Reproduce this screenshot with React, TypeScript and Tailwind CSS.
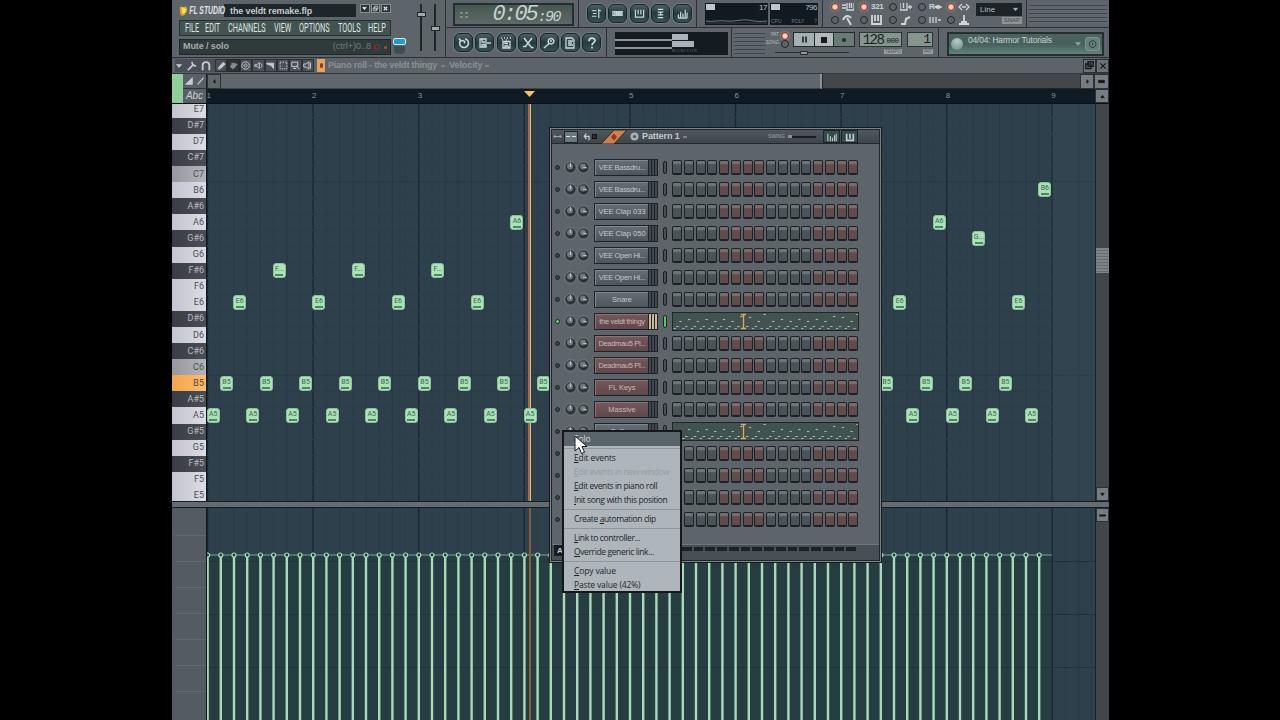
import type { ReactNode } from "react";

const STEP = 13.2;
const ROW = 16.1;

const keys = [
  "E7", "D#7", "D7", "C#7", "C7", "B6", "A#6", "A6", "G#6", "G6", "F#6", "F6", "E6",
  "D#6", "D6", "C#6", "C6", "B5", "A#5", "A5", "G#5", "G5", "F#5", "F5", "E5",
];

const phrase = [
  "A5", "B5", "E6", "A5", "B5", "F#6", "A5", "B5", "E6", "A5", "B5", "F#6",
  "A5", "B5", "E6", "A5", "B5", "F#6", "A5", "B5", "E6", "A5", "B5", "A6",
  "A5", "B5", "G#6", "A5", "B5", "E6", "A5", "B6",
];
const melody = [...phrase, ...phrase];

const channels = [
  { name: "VEE Bassdru...", kind: "grey" },
  { name: "VEE Bassdru...", kind: "grey" },
  { name: "VEE Clap 033", kind: "grey" },
  { name: "VEE Clap 050", kind: "grey" },
  { name: "VEE Open Hi...", kind: "grey" },
  { name: "VEE Open Hi...", kind: "grey" },
  { name: "Snare", kind: "grey" },
  { name: "the veldt thingy", kind: "red", roll: true, on: true },
  { name: "Deadmau5 Pl...", kind: "red" },
  { name: "Deadmau5 Pl...", kind: "red" },
  { name: "FL Keys", kind: "red" },
  { name: "Massive", kind: "red" },
  { name: "DrOne", kind: "grey", roll: true },
  { name: "", kind: "grey" },
  { name: "", kind: "grey" },
  { name: "", kind: "grey" },
  { name: "", kind: "grey" },
];

const contextMenu = [
  [{ label: "Solo", active: true }],
  [
    { label: "Edit events" },
    { label: "Edit events in new window", disabled: true },
    { label: "Edit events in piano roll" },
    { label: "Init song with this position" },
  ],
  [{ label: "Create automation clip", accel: 7 }],
  [{ label: "Link to controller..." }, { label: "Override generic link..." }],
  [{ label: "Copy value" }, { label: "Paste value (42%)" }],
] as { label: string; active?: boolean; disabled?: boolean; accel?: number }[][];

const mainMenu = [
  { label: "FILE", w: "w-[20px]" },
  { label: "EDIT", w: "w-[23px]" },
  { label: "CHANNELS", w: "w-[46px]" },
  { label: "VIEW", w: "w-[25px]" },
  { label: "OPTIONS", w: "w-[39px]" },
  { label: "TOOLS", w: "w-[30px]" },
  { label: "HELP", w: "w-[20px]" },
];

const Icon = ({ children, size = 12 }: { children: ReactNode; size?: number }) => (
  <svg width={size} height={size} viewBox="0 0 12 12" fill="none" stroke="currentColor" strokeWidth="1.3" className="shrink-0">
    {children}
  </svg>
);

const windowIcons = [
  <path d="M1 3h5M2 6h4M1 9h5M8.500 1v10M8.500 3H11" />,
  <path d="M1 4h2v4H1zM4.500 4h1v4h-1zM7 4h1v4H7zM9.500 4h1.500v4H9.500z" />,
  <path d="M1.500 2v8h9V2M4.500 2v5M7.500 2v5" />,
  <path d="M3 1.500h6M3 4.500h6M3 7.500h6M3 10.500h6M6 4v4" />,
  <path d="M1.500 11V7M4 11V4M6.500 11V6M9 11V2M11 11V5M1 11h10" />,
];

const toolIcons = [
  <path d="M2.500 3.500A4.400 4.400 0 1 0 7 1.800M1 1.500l2 2.500 3-.5M6.500 3.500v3" strokeWidth="1.600" />,
  <path d="M1 2h6v8H1zM3 2v3h3M3 10V7.500h2.500V10M8 6h4" />,
  <path d="M3 4.500h7V11H3zM5 4.500v2h3M5 11V9h3v2M1 1h1M4 1h1M7 1h1M10 1h1M2 2.800h1M6 2.800h1" />,
  <path d="M2 1l7 9M10 1L3 10M1 9.500h2M9 10.500h2.500" strokeWidth="1.500" />,
  <path d="M8 1.500a2.800 2.800 0 1 0 .1 0M6 6.500L1 11M8 3v2" strokeWidth="1.500" />,
  <path d="M3 1h5l2 2v8H2V1zM4 4h5M4 6h4M4 8h5" />,
  <path d="M3 4.200C3 .2 9 .2 9 3.500 9 5.800 6 5.500 6 8.200M6 9.800v1.600" strokeWidth="1.800" />,
];

const rollIcons = [
  <path d="M2 9l6-7 3 2-6 6zM1 10l3 1" fill="currentColor" />,
  <path d="M2 8c1-5 5-6 9-3-3 0-2 5-6 5zM3 3h3" fill="currentColor" />,
  <path d="M6 1a5 5 0 1 0 .1 0M6 4a2 2 0 1 0 .1 0" />,
  <path d="M1 5h3l3-3v8L4 7H1zM9 3c2 2 2 4 0 6" />,
  <path d="M1 3h9v7L7 6 1 4z" fill="currentColor" />,
  <path d="M1.500 1.500h9v9h-9z" strokeDasharray="2 1.300" />,
  <path d="M1 1.500h8v6H1zM7 6l4 5M3 10h4" />,
  <path d="M1 4h3l4-3v10L4 8H1zM10 2v8" />,
];

const RoundButton = ({ children }: { children: ReactNode }) => (
  <div className="flex h-[19px] w-[19px] items-center justify-center rounded-[6px] border border-[#17262a] bg-linear-to-b from-[#4c6062] via-[#263c40] to-[#38504f] text-[#ccd9da] shadow-[0_0_0_1px_#727a80]">
    {children}
  </div>
);

const Lamp = ({ on }: { on?: boolean }) => (
  <span
    className={
      on
        ? "h-[8px] w-[8px] shrink-0 rounded-full border border-[#7b4038] bg-[radial-gradient(circle,#ffd9cf_20%,#f0735f)] shadow-[0_0_2px_#ff9784]"
        : "h-[8px] w-[8px] shrink-0 rounded-full border border-[#22272a] bg-[#5d6469]"
    }
  />
);

const Lines = () => (
  <div className="h-full w-full bg-[repeating-linear-gradient(to_bottom,#5f666c_0px,#5f666c_3px,#3f464b_3px,#3f464b_4px)]" />
);

const LeftPanel = () => (
  <div className="flex h-full w-[274px] border-r border-[#2b3135]">
    <div className="flex w-[219px] flex-col pt-[3px] pl-[7px]">
      <div className="flex h-[14px] items-center">
        <svg width="9" height="13" viewBox="0 0 9 13">
          <path d="M1 6C0 2 3 1 5 2c4 0 4 5 2 7-1 2-3 3-4 3C1 11 1 9 1 6z" fill="#e79a25" />
          <path d="M3 3c-1 3 0 6 1 7 2-1 3-3 3-5z" fill="#f8df6c" />
          <path d="M4 0l2 3-4 0z" fill="#48753d" />
        </svg>
        <div className="flex w-[36px] overflow-visible">
          <span className="origin-left scale-x-[.62] pl-[2px] text-[11px] leading-none font-bold whitespace-nowrap text-[#dfe5e6] italic">
            FL STUDIO
          </span>
        </div>
        <div className="flex h-[13px] w-[132px] items-center bg-[#1d2629] pt-[2px] pl-[6px] text-[9px] leading-none font-bold tracking-[-.12px] text-[#c3c9cb]">
          the veldt remake.flp
        </div>
        <div className="mb-[3px] ml-[4px] flex gap-[1px] text-[#dfe4e6]">
          {[<path d="M3 4h6L6 8z" fill="currentColor" />, <path d="M4 2h6v5H4zM2 5h6v5H2z" />, <path d="M3 3l6 6M9 3L3 9" strokeWidth="2" />].map((p, i) => (
            <span key={i} className="flex h-[9px] w-[9.500px] items-center justify-center border border-[#878e93] bg-[#2c3437]">
              <Icon size={7}>{p}</Icon>
            </span>
          ))}
        </div>
      </div>
      <div className="mt-[3px] flex h-[16px] w-[212px] items-center border border-[#26302f] bg-[#43534f] pl-[5px] font-['Roboto'] text-[12px] leading-none text-[#dde6e4]">
        {mainMenu.map((m) => (
          <div key={m.label} className={m.w}>
            <span className="inline-block origin-left scale-x-[.61] whitespace-nowrap">{m.label}</span>
          </div>
        ))}
      </div>
      <div className="mt-[3px] flex h-[16px] w-[212px] items-center border border-[#1f2829] bg-[#2f3a3a] px-[3px] text-[9px]">
        <span className="font-bold tracking-[-.1px] text-[#a5adae]">Mute / solo</span>
        <span className="ml-auto text-[#71797c]">(ctrl+)0..8</span>
        <span className="ml-[3px] h-[6px] w-[6px] rounded-full border border-[#a03131]" />
        <span className="ml-[4px] h-[3px] w-[3px] rounded-full bg-[#d63a3a]" />
      </div>
    </div>
    <div className="flex w-[16px] flex-col items-center justify-end pb-[3px]">
      <div className="h-[7px] w-[13px] rounded-[2px] border border-[#c8effa] bg-[#1d9bdd]" />
      <div className="mt-[1px] h-[8px] w-[11px] rounded-b-[4px] bg-[#414d54]" />
    </div>
    <div className="flex gap-[4px] pt-[4px] pl-[9px]">
      <div className="flex h-[48px] w-[10px] flex-col items-center">
        <div className="h-[8px] w-[2px] bg-[#20272b]" />
        <div className="h-[5px] w-[9px] border border-[#22292c] bg-[#a2a9ad]" />
        <div className="h-[34px] w-[2px] bg-[#20272b]" />
      </div>
      <div className="flex h-[48px] w-[10px] flex-col items-center">
        <div className="h-[22px] w-[2px] bg-[#20272b]" />
        <div className="h-[5px] w-[9px] border border-[#22292c] bg-[#a2a9ad]" />
        <div className="h-[20px] w-[2px] bg-[#20272b]" />
      </div>
    </div>
  </div>
);

const TopRow = () => (
  <div className="flex h-[28px] border-b border-[#2b3135]">
    <div className="w-[133px] border-r border-[#2b3135] pt-[3px] pl-[7px]">
      <div className="flex h-[23px] w-[121px] items-center justify-end border-2 border-[#242f2f] bg-linear-to-b from-[#495753] to-[#5c6a65] pr-[12px] font-['Liberation_Mono'] text-[#c6d4d0] italic">
        <div className="mr-auto ml-[5px] grid grid-cols-2 gap-[2px]">
          {[0, 1, 2, 3].map((i) => (
            <span key={i} className="h-[2px] w-[3px] bg-[#7d8a86]" />
          ))}
        </div>
        <span className="text-[22px] leading-none tracking-[-2.2px]">0:05</span>
        <span className="pt-[5px] pl-[1px] text-[15px] leading-none tracking-[-1.5px]">:90</span>
      </div>
    </div>
    <div className="flex w-[118px] items-center gap-[2.400px] border-r border-[#2b3135] pl-[8px]">
      {windowIcons.map((icon, i) => (
        <RoundButton key={i}>
          <Icon size={11}>{icon}</Icon>
        </RoundButton>
      ))}
    </div>
    <div className="flex w-[126px] gap-[2px] border-r border-[#2b3135] pt-[3px] pl-[8px] text-[8px] leading-none text-[#b9c3c8]">
      <div className="flex h-[22px] w-[63px] flex-col justify-between bg-[#111a20] p-[1px]">
        <div className="flex justify-between">
          <span className="h-[6px] w-[9px] bg-[#bdc8c9]" />
          <span className="tracking-[-.5px]">17</span>
        </div>
        <svg width="61" height="7" fill="none" stroke="#6d7a80">
          <path d="M0 4c9 1 12-1 20 0s15-2 22-1 10 2 19 1" />
          <path d="M0 6h61" stroke="#35434a" />
        </svg>
      </div>
      <div className="flex h-[22px] w-[48px] flex-col justify-between bg-[#111a20] p-[1px]">
        <div className="flex justify-between">
          <span className="h-[6px] w-[9px] bg-[#bdc8c9]" />
          <span className="tracking-[-.5px]">796</span>
        </div>
        <div className="flex justify-between text-[5px] text-[#75838a]">
          <span>CPU</span>
          <span>POLY</span>
          <span>7</span>
        </div>
      </div>
    </div>
    <div className="flex w-[204px] border-r border-[#2b3135] text-[#cfd5d8]">
      <div className="grid h-[26px] w-[153px] grid-cols-5 pt-[1px] pl-[8px]">
        {[
          { on: true, icon: <path d="M0 4h4M0 7h4M5 2v7h7V2M7.500 2v5M9.500 2v5" /> },
          { on: true, text: "321" },
          { on: false, icon: <path d="M0 2v7h7V2M3.500 2v5M8 6h4M10 4v4" /> },
          { on: false, text: "R◂▸" },
          { on: true, icon: <path d="M4 3L1 6l3 3M8 3l3 3-3 3M4 6h4" /> },
          { on: false, icon: <path d="M1 6c2-5 6-5 8-2M5 4l4 7" strokeWidth="2" /> },
          { on: false, icon: <path d="M1 1v9h9V1M4 1v6M7 1v6" strokeWidth="1.800" /> },
          { on: false, icon: <path d="M1 10h4l1-5 4-2" strokeWidth="2" /> },
          { on: false, icon: <path d="M1 3v6M4 3v6M7 3v6M9 6h3" /> },
          { on: false, icon: <path d="M1 10h10M6 1v7M3 8h6" strokeWidth="1.800" /> },
        ].map((s, i) => (
          <div key={i} className="flex items-center gap-[3px]">
            <Lamp on={s.on} />
            {s.text ? <span className="text-[8px] leading-none font-bold tracking-[-.3px]">{s.text}</span> : <Icon size={12}>{s.icon}</Icon>}
          </div>
        ))}
      </div>
      <div className="flex flex-col items-end pt-[3px]">
        <div className="flex h-[13px] w-[46px] items-center justify-between bg-[#1c2427] px-[4px] text-[8px] text-[#b6bec1]">
          Line
          <Icon size={5}>
            <path d="M1 3h10L6 9z" fill="currentColor" />
          </Icon>
        </div>
        <span className="mt-[1px] bg-[#8d9499] px-[2px] text-[6px] leading-[7px] text-[#3d4448]">SNAP</span>
      </div>
    </div>
    <div className="flex-1 p-[2px]">
      <Lines />
    </div>
  </div>
);

const BottomRow = () => (
  <div className="flex h-[29px]">
    <div className="flex w-[161px] items-center gap-[2.400px] border-r border-[#2b3135] pl-[8px]">
      {toolIcons.map((icon, i) => (
        <RoundButton key={i}>
          <Icon>{icon}</Icon>
        </RoundButton>
      ))}
    </div>
    <div className="w-[125px] border-r border-[#2b3135] pt-[4px] pl-[8px]">
      <div className="flex h-[23px] w-[113px] bg-[#141c20]">
        <div className="flex w-[57px] flex-col gap-[6px] pt-[7px]">
          <div className="h-[2px] bg-[#8c979c]" />
          <div className="h-[2px] bg-[#8c979c]" />
        </div>
        <div className="flex flex-col gap-[1px] pt-[2px]">
          <div className="h-[6px] w-[16px] bg-[#aab2b9]" />
          <div className="h-[6px] w-[22px] bg-[#aab2b9]" />
          <span className="text-[4px] leading-[6px] tracking-[1px] whitespace-nowrap text-[#657177]">MONITOR</span>
        </div>
      </div>
    </div>
    <div className="w-[35px] p-[2px]">
      <Lines />
    </div>
    <div className="flex w-[172px] border-r border-[#2b3135] pt-[4px]">
      <div className="flex w-[26px] flex-col items-end gap-[1px] pr-[4px] text-[4.500px] text-[#b6bdc0]">
        <div className="flex h-[7px] items-center gap-[2px]">
          PAT <Lamp on />
        </div>
        <div className="flex h-[7px] items-center gap-[2px]">
          SONG <Lamp />
        </div>
      </div>
      <div>
        <div className="flex h-[15px] w-[62px] border border-[#242b2e] text-[#1c2427]">
          <div className="flex w-[20px] items-center justify-center bg-[#a4b0b4]">
            <Icon size={9}>
              <path d="M4 2v8M8 2v8" strokeWidth="2.200" />
            </Icon>
          </div>
          <div className="flex w-[20px] items-center justify-center border-x border-[#242b2e] bg-[#b2babc]">
            <div className="h-[6px] w-[6px] bg-[#171d1f]" />
          </div>
          <div className="flex w-[20px] items-center justify-center bg-[#687b75]">
            <div className="h-[4px] w-[4px] rounded-full bg-[#212b28]" />
          </div>
        </div>
        <div className="mt-[3px] -ml-[18px] flex h-[5px] w-[74px] items-center">
          <div className="h-px w-[25px] bg-[#2b3236]" />
          <div className="h-[4px] w-[8px] border border-[#262c2f] bg-[#8f979b]" />
          <div className="h-px flex-1 bg-[#2b3236]" />
        </div>
      </div>
      <div className="ml-[4px] flex flex-col items-end">
        <div className="flex h-[15px] w-[43px] items-center justify-center border border-[#2b3533] bg-[#86958e] font-['Liberation_Mono'] text-[14px] leading-none tracking-[-1.500px] text-[#17211e]">
          128<span className="pt-[3px] pl-[3px] text-[8px] tracking-[-.8px]">000</span>
        </div>
        <span className="mt-[2px] bg-[#9aa1a5] px-[1px] text-[4.500px] leading-[5px] text-[#4a5155]">TEMPO</span>
      </div>
      <div className="ml-[5px] flex flex-col items-end">
        <div className="flex h-[15px] w-[26px] items-center justify-end border border-[#2b3533] bg-[#86958e] pr-[1px] font-['Liberation_Mono'] text-[13px] leading-none text-[#17211e]">
          1
        </div>
        <span className="mt-[2px] bg-[#9aa1a5] px-[1px] text-[4.500px] leading-[5px] text-[#4a5155]">PAT</span>
      </div>
    </div>
    <div className="pt-[4px] pl-[8px]">
      <div className="flex h-[24px] w-[157px] items-center border-2 border-[#23302f] bg-linear-to-b from-[#4d6361] via-[#46605b] to-[#638079] px-[2px]">
        <div className="h-[12px] w-[12px] rounded-full bg-[radial-gradient(circle_at_50%_25%,#b7cdc6,#6c8780)]" />
        <span className="ml-[5px] pb-[8px] text-[8.500px] leading-none tracking-[-.22px] whitespace-nowrap text-[#c5d2cf]">04/04: Harmor Tutorials</span>
        <div className="ml-auto flex items-center gap-[4px] text-[#8ea39e]">
          <Icon size={6}>
            <path d="M1 3h10L6 9z" fill="currentColor" />
          </Icon>
          <div className="flex h-[14px] w-[15px] items-center justify-center rounded-[3px] border border-[#7d948e] bg-[#66817b] text-[#283936]">
            <Icon size={9}>
              <path d="M6 1a4.500 4.500 0 1 0 .1 0M6 4v3" />
            </Icon>
          </div>
        </div>
      </div>
    </div>
  </div>
);

const RollTitle = () => (
  <div className="flex h-[17px] items-center border-t border-b border-t-[#2a3034] border-b-[#33393d] bg-[#5c646a] pl-[3px] text-[#c5cacd]">
    <div className="flex h-[13px] w-[40px] items-center justify-between bg-[#485056] pr-[4px] pl-[1px]">
      <Icon size={6}>
        <path d="M1 3h10L6 9z" fill="currentColor" />
      </Icon>
      <Icon size={10}>
        <path d="M1 11l6-6M6 1c0 3 2 5 5 5" strokeWidth="2" />
      </Icon>
      <Icon size={10}>
        <path d="M2 11V5c0-5 8-5 8 0v6" strokeWidth="2.200" />
      </Icon>
    </div>
    <div className="flex w-[101px]">
      {rollIcons.map((icon, i) => (
        <span
          key={i}
          className={
            i === 1
              ? "flex h-[13px] w-[12.400px] items-center justify-center border border-[#22282b] bg-[#2c3438] text-[#858d91]"
              : "flex h-[13px] w-[12.400px] items-center justify-center border border-[#2b3135] bg-[#4a5156]"
          }
        >
          <Icon size={9}>{icon}</Icon>
        </span>
      ))}
    </div>
    <div className="ml-[1px] flex h-[13px] w-[8px] items-center justify-center bg-[#e5a55c]">
      <div className="h-[5px] w-[3px] rounded-full bg-[#8e3a1c]" />
    </div>
    <span className="ml-[3px] text-[9px] font-bold tracking-[-.22px] whitespace-nowrap text-[#8a9196]">
      Piano roll - the veldt thingy
    </span>
    <span className="ml-[4px] h-[2px] w-[4px] bg-[#7b8287]" />
    <span className="ml-[4px] text-[9px] font-bold tracking-[-.1px] text-[#8a9196]">Velocity</span>
    <span className="ml-[3px] h-[2px] w-[4px] bg-[#7b8287]" />
    <div className="ml-auto flex">
      <span className="flex h-[14px] w-[13px] items-center justify-center border border-[#2b3135] bg-[#6a7177] text-[#15191b]">
        <Icon size={9}>
          <path d="M4 1h7v6H4zM1 4h7v6H1z" strokeWidth="1.800" />
        </Icon>
      </span>
      <span className="flex h-[14px] w-[13px] items-center justify-center border border-[#2b3135] bg-[#6a7177] text-[#15191b]">
        <Icon size={8}>
          <path d="M2 2l8 8M10 2l-8 8" strokeWidth="1.800" />
        </Icon>
      </span>
    </div>
  </div>
);

const ScrollButton = ({ path, className }: { path: string; className: string }) => (
  <div className={"flex items-center justify-center border border-[#2b3135] bg-[#757c82] text-[#14181a] " + className}>
    <Icon size={7}>
      <path d={path} fill="currentColor" />
    </Icon>
  </div>
);

const RollHeader = () => (
  <div className="flex h-[29px]">
    <div className="w-[11px] bg-[#8fcf9b]" />
    <div className="flex w-[24px] flex-col border-r border-[#1d2428] bg-[#596066] text-[#c6cccf]">
      <div className="flex h-[15px] items-center justify-center gap-[4px] border-b border-[#30373b]">
        <Icon size={8}>
          <path d="M1 11L11 1v10z" fill="currentColor" />
        </Icon>
        <Icon size={8}>
          <path d="M1 11L10 1" strokeWidth="2" />
        </Icon>
      </div>
      <div className="flex h-[14px] items-center justify-center text-[10px] leading-none italic">Abc</div>
    </div>
    <div className="flex flex-1 flex-col">
      <div className="flex h-[15px]">
        <ScrollButton path="M7 3v6L4 6z" className="h-[15px] w-[14px] !bg-[#5f676d]" />
        <div className="w-[601px] border-r-2 border-b border-r-[#8d9499] border-b-[#3d4448] bg-[#5f676d]" />
        <div className="flex-1 border-b border-l border-[#20272b] bg-[#41474b]" />
        <ScrollButton path="M5 3v6l3-3z" className="h-[15px] w-[14px]" />
        <ScrollButton path="M1 4h10v4H1z" className="h-[15px] w-[15px]" />
      </div>
      <div className="flex h-[14px] bg-[#0e1b24]">
        <div className="relative h-full flex-1 overflow-hidden">
          {[1, 2, 3, 4, 5, 6, 7, 8, 9].map((n) => (
            <span
              key={n}
              className="absolute top-[3px] text-[8px] leading-none text-[#86939a]"
              style={{ left: (n - 1) * STEP * 8 - 0.5 }}
            >
              {n === 4 ? "" : n}
            </span>
          ))}
          <svg width="12" height="8" className="absolute top-[1px] left-[317px]">
            <path d="M0 1h11L5.500 7z" fill="#f6c262" />
          </svg>
        </div>
        <ScrollButton path="M3 8h6L6 4z" className="h-[14px] w-[14px]" />
      </div>
    </div>
  </div>
);

const keyClass = (k: string) => {
  if (k === "B5") return "bg-linear-to-r from-[#f2a550] to-[#fbbd6e] text-[#5d4322]";
  if (k.includes("#")) return "bg-linear-to-r from-[#3a3c43] to-[#4c4e57] text-[#b9bbc3]";
  if (k.startsWith("C")) return "bg-linear-to-r from-[#97989e] to-[#b4b5bb] text-[#4b4e56]";
  return "bg-linear-to-r from-[#c3c4cd] to-[#dcdce5] text-[#4b4e56]";
};

const Keyboard = () => (
  <div className="flex h-[397px] w-[34px] flex-col justify-end overflow-hidden">
    <div className="-mb-[3px]">
      {keys.map((k) => (
        <div
          key={k}
          className={"flex h-[16.1px] items-center justify-end pr-[2px] font-['Roboto'] text-[9px] leading-none " + keyClass(k)}
        >
          {k}
        </div>
      ))}
    </div>
  </div>
);

const GridLines = ({ height, children }: { height: number; children?: ReactNode }) => (
  <svg width="888" height={height} className="absolute inset-0">
    {Array.from({ length: 68 }, (_, i) => (
      <path
        key={i}
        d={`M${i * STEP + 0.5} 0V${height}`}
        stroke={i % 8 === 0 ? "#192732" : i % 2 === 0 ? "#273843" : "#2b3d48"}
        strokeWidth={i % 8 === 0 ? 1.4 : 1}
      />
    ))}
    {children}
  </svg>
);

const NoteGrid = () => (
  <div className="relative h-[397px] w-[888px] overflow-hidden bg-[#2e404b]">
    <GridLines height={397}>
      {keys.map((k, i) => (
        <path
          key={k}
          d={`M0 ${i * ROW - 2.6}H888`}
          stroke={k.startsWith("B") ? "#263741" : "#2c3e49"}
        />
      ))}
      <path d="M845 0h43v397h-43z" fill="#3a4f5c" opacity=".3" />
    </GridLines>
    <div className="absolute top-0 left-[321px] h-full w-[3px] border-r border-[#dcb88a] bg-[#a56b41]" />
    {melody.map((n, i) => (
      <div
        key={i}
        className="absolute flex h-[15px] w-[13px] flex-col items-center rounded-[3px] border border-[#88c39a] bg-[#ace2b8] pt-[2px] font-['Roboto'] text-[7px] leading-[7px] text-[#35664a]"
        style={{ left: i * STEP - 0.2, top: keys.indexOf(n) * ROW - 2.1 }}
      >
        {n.includes("#") ? n[0] + "..." : n}
        <span className="mt-[1px] h-[2px] w-[8px] bg-[#4f8562]" />
      </div>
    ))}
  </div>
);

const VelocityPane = () => (
  <div className="relative h-[213px] w-[888px] overflow-hidden bg-[#2e404b]">
    <GridLines height={213}>
      <path d="M0 47h845v166H0z" fill="#203a3b" opacity=".55" />
      <path d="M0 53.500H888M0 106.500H888M0 159.500H888" stroke="#22323c" />
      <path d="M0 47H845" stroke="#7fa393" strokeWidth="1.200" />
      {melody.map((_, i) => (
        <g key={i}>
          <path d={`M${i * STEP + 0.6} 49V213`} stroke="#a9dbba" strokeWidth="2.4" />
          <circle cx={i * STEP + 0.6} cy="47" r="2" fill="#24393c" stroke="#a6dbb6" strokeWidth="1.200" />
        </g>
      ))}
    </GridLines>
    <div className="absolute top-0 left-[322px] h-full w-[2px] bg-[#8a5b3c]" />
  </div>
);

const PianoRoll = () => (
  <div>
    <RollTitle />
    <RollHeader />
    <div className="flex border-t border-[#0b1217]">
      <Keyboard />
      <div className="w-px bg-[#0d161c]" />
      <NoteGrid />
      <div className="flex h-[397px] w-[14px] flex-col border-l border-[#1b2226] bg-[#41464a]">
        <div className="mt-[144px] h-[25px] bg-[repeating-linear-gradient(to_bottom,#7e8488_0px,#7e8488_2px,#666c70_2px,#666c70_3px)]" />
        <ScrollButton path="M3 4h6L6 8z" className="mt-auto h-[14px] w-[13px]" />
      </div>
    </div>
    <div className="h-[7px] border-y border-[#161d21] bg-[#656c71]" />
    <div className="flex h-[213px]">
      <div className="flex w-[34px] flex-col gap-[25px] bg-[#545b61] pt-[27px] pl-[3px]">
        {[0, 1, 2, 3, 4, 5, 6].map((i) => (
          <div key={i} className="h-px shrink-0 bg-[#616970]" />
        ))}
      </div>
      <div className="w-px bg-[#0d161c]" />
      <VelocityPane />
      <div className="w-[14px] border-l border-[#1b2226] bg-[#41464a]">
        <ScrollButton path="M1 5h10v2H1z" className="h-[14px] w-[13px]" />
      </div>
    </div>
  </div>
);

const pitch: Record<string, number> = { B6: 0, A6: 2, "G#6": 3, "F#6": 5, E6: 7, B5: 12, A5: 14 };

const MiniRoll = () => (
  <svg width="187" height="19" className="border border-[#1d2628] bg-[#42534f]">
    {melody.map((n, i) => (
      <path key={i} d={`M${i * 2.9 + 0.5} ${pitch[n] + 1.5}h2.4`} stroke="#a3b8ab" strokeWidth="1.100" />
    ))}
    <path d="M70.500 1v15M68 1.500h5M68 15.500h5" stroke="#dca864" strokeWidth="1.300" />
  </svg>
);

const Knob = ({ pan }: { pan?: boolean }) => (
  <svg width="13" height="13" viewBox="0 0 13 13">
    <circle cx="6.500" cy="6.500" r="6" fill="#4b5358" stroke="#7a8287" strokeWidth=".7" />
    <circle cx="6.500" cy="6.500" r="4.500" fill="#2a3135" />
    <circle cx="6" cy="5.500" r="3" fill="#6e777c" />
    <path d={pan ? "M6 6l4 1" : "M6.500 6V2.200"} stroke="#c2c9cc" strokeWidth="1.200" />
  </svg>
);

const ChannelRow = ({ channel }: { channel: (typeof channels)[number] }) => (
  <div className="flex h-[22px] items-center">
    <span
      className={
        channel.on
          ? "h-[5px] w-[5px] rounded-full border border-[#1d2528] bg-[#5fd36b]"
          : "h-[5px] w-[5px] rounded-full border border-[#1d2528] bg-[#3c4448]"
      }
    />
    <div className="ml-[4px] flex">
      <Knob />
      <Knob pan />
    </div>
    <div className="ml-[4px] flex h-[17px] w-[64px] border border-[#1d2327] bg-[#1d2327]">
      <div
        className={
          "flex w-[53px] items-center justify-center overflow-hidden border-t border-l text-[7.500px] leading-none whitespace-nowrap " +
          (channel.name.length > 12 ? "tracking-[-.32px] " : "") +
          (channel.kind === "red"
            ? "border-[#8c7376] bg-linear-to-b from-[#74585b] to-[#5f474a] text-[#cbb8b9]"
            : "border-[#7f888e] bg-linear-to-b from-[#646d73] to-[#4c555b] text-[#c2c9cc]")
        }
      >
        {channel.name}
      </div>
      <div className="flex flex-1 justify-between pl-[1px]">
        {[0, 1, 2].map((i) => (
          <span key={i} className={channel.on ? "w-[2px] bg-[#c9bc98]" : "w-[2px] bg-[#40484d]"} />
        ))}
      </div>
    </div>
    <span
      className={
        channel.on
          ? "ml-[5px] h-[13px] w-[4px] rounded-[2px] border border-[#1d2528] bg-[#55c865]"
          : "ml-[5px] h-[13px] w-[4px] rounded-[2px] border border-[#171d20] bg-[#495156]"
      }
    />
    <div className="ml-[5px] flex w-[188px] gap-[1.770px]">
      {channel.roll ? (
        <MiniRoll />
      ) : (
        Array.from({ length: 16 }, (_, i) => (
          <span
            key={i}
            className={
              Math.floor(i / 4) % 2
                ? "h-[15px] w-[10px] shrink-0 rounded-[2px] border border-b-2 border-[#1e2225] bg-linear-to-b from-[#7d6a6c] from-25% to-[#614b4d] to-30%"
                : "h-[15px] w-[10px] shrink-0 rounded-[2px] border border-b-2 border-[#1a2023] bg-linear-to-b from-[#6c7579] from-25% to-[#4a5357] to-30%"
            }
          />
        ))
      )}
    </div>
  </div>
);

const ChannelRack = () => (
  <div className="absolute top-[127px] left-[549px] h-[436px] w-[333px] border border-[#151c20] bg-[#7b8389] p-[1px]">
    <div className="flex h-full flex-col border border-[#20272b] bg-[#5d656b]">
      <div className="flex h-[14px] shrink-0 items-center border-b border-[#22292d] bg-linear-to-b from-[#50575d] to-[#3f464b] text-[#c5cbce]">
        <span className="ml-[1px] flex w-[9px] text-[#9fa7ab]">
          <Icon size={9}>
            <path d="M1 6h10M3 4L1 6l2 2M9 4l2 2-2 2" />
          </Icon>
        </span>
        <span className="ml-[2px] flex h-[12px] w-[14px] items-center justify-center gap-[2px] border border-[#1d2427] bg-[#6a787d]">
          <span className="h-px w-[4px] bg-[#dfe5e7]" />
          <span className="h-px w-[4px] bg-[#dfe5e7]" />
        </span>
        <span className="ml-[5px] flex items-center gap-[1px]">
          <Icon size={8}>
            <path d="M9 11V5H2M5 1L2 5l3 4" strokeWidth="2" />
          </Icon>
          <span className="h-[5px] w-[5px] border border-[#101416] bg-[#3b2b20]" />
        </span>
        <svg width="27" height="14" className="ml-[4px]">
          <path d="M0 14L13 0h13L13 14z" fill="#c88450" stroke="#2a2420" />
          <path d="M13 3.500l3 3.500-3 3.500-3-3.500z" fill="#a32f1c" />
        </svg>
        <svg width="9" height="9" className="ml-[2px]">
          <circle cx="4.500" cy="4.500" r="4" fill="#a9b1b5" />
          <circle cx="4.500" cy="4.500" r="1.500" fill="#4a5257" />
        </svg>
        <span className="ml-[3px] text-[9px] leading-none font-bold tracking-[-.1px] whitespace-nowrap">Pattern 1</span>
        <span className="ml-[3px] h-[2px] w-[4px] bg-[#7b8387]" />
        <span className="ml-auto text-[5px] leading-none text-[#a1a9ad]">SWING</span>
        <span className="ml-[3px] h-[3px] w-[4px] bg-[#8a9296]" />
        <span className="h-[2px] w-[24px] bg-[#171d20]" />
        <span className="ml-[7px] flex h-[13px] w-[17px] items-center justify-center border border-[#1b2427] bg-[#354b48]">
          <Icon size={10}>
            <path d="M1 2v9M4 5v6M6.500 7v4M9 4v7M11 2v9" />
          </Icon>
        </span>
        <span className="mr-[21px] ml-[1px] flex h-[13px] w-[17px] items-center justify-center border border-[#1b2427] bg-[#354b48]">
          <Icon size={10}>
            <path d="M2 2v8h8V2M6 2v6" strokeWidth="2" />
          </Icon>
        </span>
      </div>
      <div className="pt-[12px] pl-[3px]">
        {channels.map((c, i) => (
          <ChannelRow key={i} channel={c} />
        ))}
      </div>
      <div className="mt-auto flex h-[16px] shrink-0 border-t border-[#70777c] bg-[#484f55]">
        <div className="ml-[2px] flex h-[11px] w-[113px] items-center bg-[#171d20] pl-[3px] text-[8px] font-bold text-[#c2c8ca]">All</div>
        <div className="ml-[3px] flex gap-[2px] pt-[2px]">
          {Array.from({ length: 16 }, (_, i) => (
            <span key={i} className="h-[4px] w-[9.760px] bg-[#1c2326]" />
          ))}
        </div>
      </div>
    </div>
  </div>
);

const ContextMenu = () => (
  <div className="absolute top-[430px] left-[562px] h-[163px] w-[120px] border-2 border-[#14181b] bg-[#afb6bb] font-['Open_Sans'] text-[8.500px] tracking-[-.38px] text-[#20262a]">
    {contextMenu.map((group, g) => (
      <div key={g}>
        {g > 0 && (
          <div className="flex h-[5px] items-center">
            <div className="h-px w-full bg-[#8f979c]" />
          </div>
        )}
        {group.map(({ label, active, disabled, accel = 0 }) => (
          <div
            key={label}
            className={
              "flex h-[14px] items-center pl-[10px] leading-none whitespace-pre " +
              (label.length < 20 ? "tracking-[-.15px] " : "") +
              (active ? "bg-[#59656b] text-[#d4dadd]" : disabled ? "text-[#959da2]" : "")
            }
          >
            <span>
              {label.slice(0, accel)}
              <span className="underline">{label[accel]}</span>
              {label.slice(accel + 1)}
            </span>
          </div>
        ))}
      </div>
    ))}
  </div>
);

const App = () => {
  return (
    <div className="h-[720px] w-[1280px] overflow-hidden bg-black pl-[172px] font-['Liberation_Sans',sans-serif]">
      <div className="h-full w-[937px] overflow-hidden bg-[#5d656b]">
        <div className="flex h-[57px]">
          <LeftPanel />
          <div className="flex-1">
            <TopRow />
            <BottomRow />
          </div>
        </div>
        <PianoRoll />
      </div>
      <ChannelRack />
      <ContextMenu />
      <svg width="14" height="21" viewBox="0 0 14 21" className="absolute top-[435px] left-[574px]">
        <path d="M1 1v15l4-3.500 2.500 6 3-1.200L8 11.500h5z" fill="#fff" stroke="#14181a" />
      </svg>
    </div>
  );
};

export default App;
